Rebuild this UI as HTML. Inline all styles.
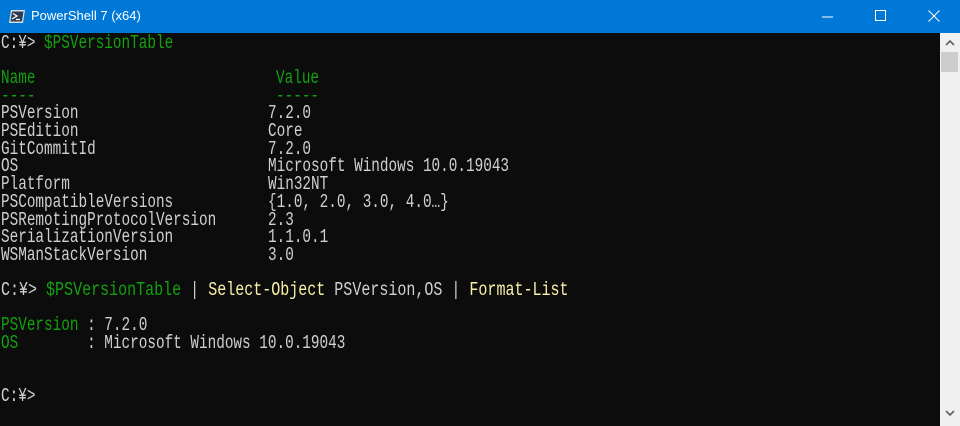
<!DOCTYPE html>
<html><head><meta charset="utf-8"><style>
body{margin:0;width:960px;height:426px;overflow:hidden;background:#0c0c0c;position:relative;font-family:"Liberation Sans",sans-serif}
#tb{position:absolute;left:0;top:0;width:960px;height:33px;background:#0078d7;color:#fff}
#tb .t{position:absolute;left:31px;top:8px;font-size:13px}
#sb{position:absolute;left:940px;top:33px;width:20px;height:393px;background:#f0f0f0}
#thumb{position:absolute;left:1px;top:19px;width:17px;height:20px;background:#cdcdcd}
.ln{position:absolute;white-space:pre;font-family:"Liberation Mono",monospace;font-size:19px;line-height:17.75px;color:#d0d0d0;transform:scaleX(0.755);transform-origin:0 0}
.g{color:#13a10e}.y{color:#f9f1a5}
</style></head><body>
<div id="tb">
<svg style="position:absolute;left:9px;top:10px" width="16" height="13" viewBox="0 0 16 13"><path d="M2 0h14l-2 13H0z" fill="#d8dde4"/><path d="M3 1.5h11.5l-1.6 10H1.5z" fill="#2c3c55"/><path d="M4 3.5l4 2.5-5 3" stroke="#fff" stroke-width="1.2" fill="none"/><path d="M7 9.5h4" stroke="#fff" stroke-width="1.2"/></svg>
<div class="t">PowerShell 7 (x64)</div>
<svg style="position:absolute;left:822px;top:16px" width="12" height="2"><path d="M0 1h11" stroke="#fff"/></svg>
<svg style="position:absolute;left:875px;top:10px" width="12" height="12"><rect x="0.5" y="0.5" width="10" height="10" fill="none" stroke="#fff"/></svg>
<svg style="position:absolute;left:928px;top:10px" width="12" height="12"><path d="M0.5 0.5l11 11M11.5 0.5l-11 11" stroke="#fff"/></svg>
</div>
<div id="sb"><div id="thumb"></div>
<svg style="position:absolute;left:5px;top:7px" width="10" height="6"><path d="M1 5l4-4 4 4" stroke="#606060" stroke-width="1.6" fill="none"/></svg>
<svg style="position:absolute;left:5px;top:377px" width="10" height="6"><path d="M1 1l4 4 4-4" stroke="#606060" stroke-width="1.6" fill="none"/></svg>
</div>
<div class="ln" style="left:1px;top:35px">C:¥&gt; <span class="g">$PSVersionTable</span></div>
<div class="ln g" style="left:1px;top:70px">Name</div><div class="ln g" style="left:276px;top:70px">Value</div>
<div class="ln g" style="left:1px;top:88px">----</div><div class="ln g" style="left:276px;top:88px">-----</div>
<div class="ln" style="left:1px;top:105px">PSVersion
PSEdition
GitCommitId
OS
Platform
PSCompatibleVersions
PSRemotingProtocolVersion
SerializationVersion
WSManStackVersion</div>
<div class="ln" style="left:268px;top:105px">7.2.0
Core
7.2.0
Microsoft Windows 10.0.19043
Win32NT
{1.0, 2.0, 3.0, 4.0…}
2.3
1.1.0.1
3.0</div>
<div class="ln" style="left:1px;top:282px;transform:scaleX(0.79)">C:¥&gt; <span class="g">$PSVersionTable</span> | <span class="y">Select-Object</span> PSVersion,OS | <span class="y">Format-List</span></div>
<div class="ln" style="left:1px;top:317px"><span class="g">PSVersion</span> : 7.2.0
<span class="g">OS</span>        : Microsoft Windows 10.0.19043</div>
<div class="ln" style="left:1px;top:388px">C:¥&gt;</div>
</body></html>
